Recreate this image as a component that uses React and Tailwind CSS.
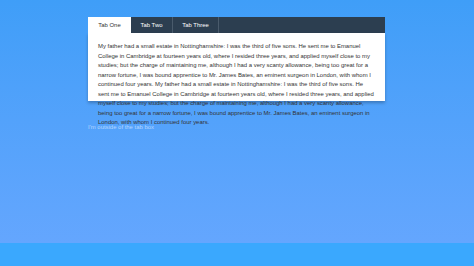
export default function App() {
  const text =
    "My father had a small estate in Nottinghamshire: I was the third of five sons. He sent me to Emanuel College in Cambridge at fourteen years old, where I resided three years, and applied myself close to my studies; but the charge of maintaining me, although I had a very scanty allowance, being too great for a narrow fortune, I was bound apprentice to Mr. James Bates, an eminent surgeon in London, with whom I continued four years.";
  return (
    <div className="w-[474px] h-[266px] flex flex-col overflow-hidden" style={{ fontFamily: '"Liberation Sans", Arial, sans-serif' }}>
      <div className="h-[243px] bg-gradient-to-b from-[#3f9ef8] to-[#64a6fe] pt-[17px] pl-[88px]">
        <div className="w-[297px]">
          <div className="flex h-[16px] bg-[#2c3e50] text-[5.93px]">
            <div className="w-[43px] bg-white text-[#333] flex items-center justify-center">Tab One</div>
            <div className="w-[42px] text-white flex items-center justify-center border-r border-[#4a5b6c]">Tab Two</div>
            <div className="w-[46px] text-white flex items-center justify-center border-r border-[#4a5b6c]">Tab Three</div>
          </div>
          <div className="h-[68px] bg-white shadow-[0_2px_3px_rgba(0,0,0,0.25)] px-[10px] pt-[9px] text-[5.93px] leading-[9.5px] text-[#333]">
            <p>{text} {text}</p>
          </div>
          <div className="mt-[22px] text-[5.93px] text-[#b5d6ff]">I'm outside of the tab box</div>
        </div>
      </div>
      <div className="h-[23px] bg-[#3aa8fe]" />
    </div>
  );
}
